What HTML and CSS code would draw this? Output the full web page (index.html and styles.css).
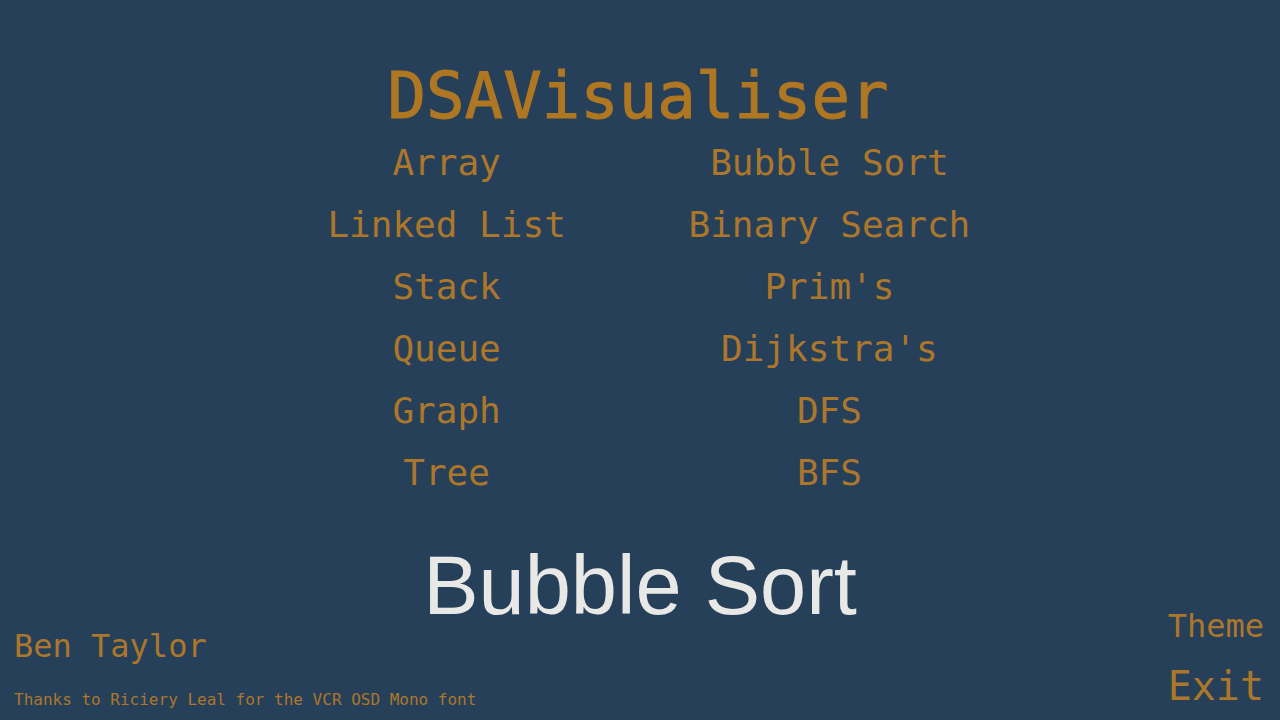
FILE: index.html
```html
<!DOCTYPE html>
<html lang="en">
<head>
    <meta charset="UTF-8">
    <meta name="viewport" content="width=device-width, initial-scale=1.0">
    <title>DSAVisualiser</title>
    <link rel="stylesheet" href="styles.css">
</head>
<body>

<main class="home">
    <h1 class="title">DSAVisualiser</h1>

    <nav class="menu">
        <div class="column">
            <button type="button">Array</button>
            <button type="button">Linked List</button>
            <button type="button">Stack</button>
            <button type="button">Queue</button>
            <button type="button">Graph</button>
            <button type="button">Tree</button>
        </div>
        <div class="column">
            <button type="button">Bubble Sort</button>
            <button type="button">Binary Search</button>
            <button type="button">Prim's</button>
            <button type="button">Dijkstra's</button>
            <button type="button">DFS</button>
            <button type="button">BFS</button>
        </div>
    </nav>
</main>

<footer class="footer">
    <div class="credits">
        <p class="author">Ben Taylor</p>
        <p class="thanks">Thanks to Riciery Leal for the VCR OSD Mono font</p>
    </div>
    <div class="options">
        <button type="button" class="theme">Theme</button>
        <button type="button" class="exit">Exit</button>
    </div>
</footer>

<!-- caption lies over the menu screen -->
<p class="caption">Bubble Sort</p>

</body>
</html>
```

FILE: styles.css
```css
* {
    box-sizing: border-box;
}

body {
    position: relative;
    display: flex;
    flex-direction: column;
    min-height: 100vh;
    margin: 0;
    background-color: #274059;
    color: #ac772b;
    font-family: "VCR OSD Mono", "DejaVu Sans Mono", monospace;
}

h1,
p {
    margin: 0;
    font-weight: normal;
}

button {
    padding: 0;
    border: none;
    background: none;
    color: inherit;
    font-family: inherit;
    cursor: pointer;
}

button:hover {
    color: #e8e8e6;
}

.home {
    padding: 60px 4px 0 0;
}

.title {
    color: #b07722;
    font-size: 64px;
    line-height: 72px;
    text-align: center;
    -webkit-text-stroke: 1px #b07722;
}

.menu {
    display: grid;
    grid-template-columns: 1fr 1fr;
    width: 60%;
    margin: 0 auto;
}

.column {
    display: flex;
    flex-direction: column;
    align-items: center;
}

.column button {
    font-size: 36px;
    line-height: 62px;
}

.footer {
    display: flex;
    justify-content: space-between;
    align-items: flex-end;
    margin-top: auto;
    padding: 0 16px 10px 14px;
}

.credits {
    display: flex;
    flex-direction: column;
    gap: 24px;
}

.options {
    display: flex;
    flex-direction: column;
    align-items: flex-start;
    gap: 16px;
}

.author,
.theme {
    font-size: 32px;
    line-height: 40px;
}

.thanks {
    font-size: 16px;
    line-height: 20px;
}

.exit {
    font-size: 40px;
    line-height: 48px;
}

.caption {
    position: absolute;
    right: 0;
    bottom: 12vh;
    left: 0;
    color: #e8e8e6;
    font-family: "Liberation Sans", Arial, sans-serif;
    font-size: 83px;
    line-height: 96px;
    text-align: center;
    pointer-events: none;
}
```
